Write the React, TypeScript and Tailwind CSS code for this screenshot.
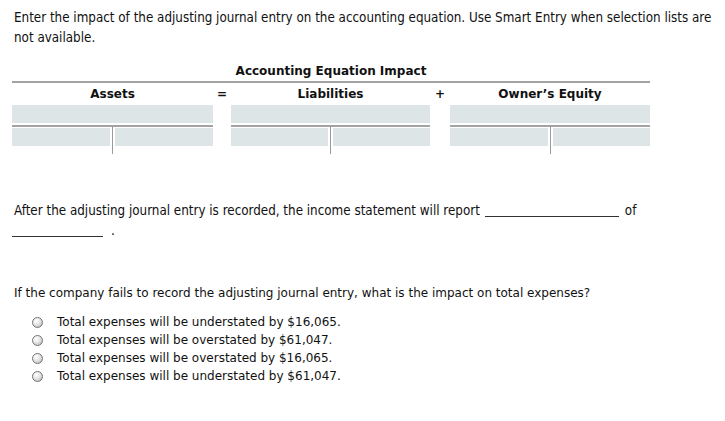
import React from "react"

const FIELD = "bg-[#dde5e7]"

const Radio = () => (
  <span className="inline-block h-[11px] w-[11px] rounded-full border border-[#737373] bg-[radial-gradient(circle_at_35%_30%,#ffffff_0%,#e6e6e6_45%,#b0b0b0_100%)]" />
)

const Block = () => (
  <div className="flex flex-col">
    <div className={`h-[18px] ${FIELD}`} />
    <div className="mt-[2px] h-[2px] bg-[#a3a3a3]" />
    <div className="flex">
      <div className={`mt-px h-[18px] flex-1 ${FIELD}`} />
      <div className="mx-[2px] h-[27px] w-px bg-[#9a9a9a]" />
      <div className={`mt-px h-[18px] flex-1 ${FIELD}`} />
    </div>
  </div>
)

const options = [
  "Total expenses will be understated by $16,065.",
  "Total expenses will be overstated by $61,047.",
  "Total expenses will be overstated by $16,065.",
  "Total expenses will be understated by $61,047.",
]

export default function App() {
  return (
    <div className="min-h-screen w-full bg-white text-[#111] font-['DejaVu_Sans_Condensed','DejaVu_Sans',sans-serif] [font-stretch:condensed]">
      <div className="pl-[14px] pr-[2px] pt-2 text-[13.3px] leading-[20px]">
        Enter the impact of the adjusting journal entry on the accounting equation. Use Smart Entry when selection lists are not available.
      </div>

      <div className="ml-[12px] mt-[15px] w-[638px] font-['DejaVu_Sans',sans-serif] [font-stretch:normal]">
        <div className="border-b-2 border-[#a3a3a3] pb-[2px] text-center text-[12px] font-bold leading-[16px]">
          Accounting Equation Impact
        </div>
        <div className="grid grid-cols-[201px_18px_199px_20px_200px] text-[12px] font-bold leading-[22px]">
          <div className="text-center">Assets</div>
          <div className="text-center">=</div>
          <div className="text-center">Liabilities</div>
          <div className="text-center">+</div>
          <div className="text-center">Owner’s Equity</div>
          <Block />
          <div />
          <Block />
          <div />
          <Block />
        </div>
      </div>

      <div className="mt-[47px] px-[14px] text-[13.3px] leading-[20px]">
        <div className="flex items-end">
          <span>After the adjusting journal entry is recorded, the income statement will report</span>
          <span className="ml-[5px] mb-[4px] inline-block w-[134px] border-b border-[#333]" />
          <span className="ml-[6px]">of</span>
        </div>
        <div className="flex items-end">
          <span className="-ml-[2px] mb-[4px] inline-block w-[91px] border-b border-[#333]" />
          <span className="ml-[8px]">.</span>
        </div>
      </div>

      <div className="mt-[43px] px-[14px] font-['DejaVu_Sans',sans-serif] text-[12px] leading-[18px] [font-stretch:normal]">
        <div>If the company fails to record the adjusting journal entry, what is the impact on total expenses?</div>
        <div className="mt-[11px] flex flex-col">
          {options.map((o) => (
            <label key={o} className="flex items-center">
              <span className="ml-[18px] mr-[14px] flex items-center">
                <Radio />
              </span>
              {o}
            </label>
          ))}
        </div>
      </div>
    </div>
  )
}
